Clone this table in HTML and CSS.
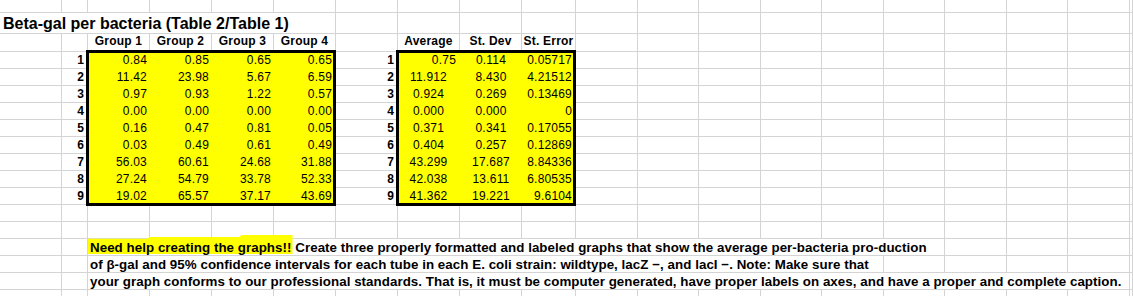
FILE: index.html
```html
<!DOCTYPE html>
<html lang="en">
<head>
<meta charset="utf-8">
<title>Beta-gal per bacteria</title>
<link rel="stylesheet" href="styles.css">
</head>
<body>
<div class="sheet">
  <!-- row 1 -->
  <i></i><i></i><i></i><i></i><i></i><i></i><i></i><i></i><i></i><i></i><i></i><i></i><i></i><i></i><i></i><i></i><i></i><i></i><i></i><i></i>
  <!-- row 2 -->
  <div class="cell title">Beta-gal per bacteria (Table 2/Table 1)</div>
  <i></i><i></i><i></i><i></i><i></i><i></i><i></i><i></i><i></i><i></i><i></i><i></i><i></i><i></i>
  <!-- row 3 -->
  <i></i><i></i>
  <div class="cell head">Group 1</div><div class="cell head">Group 2</div><div class="cell head">Group 3</div><div class="cell head">Group 4</div>
  <i></i>
  <div class="cell head">Average</div><div class="cell head">St. Dev</div><div class="cell head">St. Error</div>
  <i></i><i></i><i></i><i></i><i></i><i></i><i></i><i></i><i></i><i></i>
  <!-- rows 4-12 -->
  <i></i><div class="cell num">1</div><div class="cell num">1</div><i></i><i></i><i></i><i></i><i></i><i></i><i></i><i></i><i></i><i></i>
  <i></i><div class="cell num">2</div><div class="cell num">2</div><i></i><i></i><i></i><i></i><i></i><i></i><i></i><i></i><i></i><i></i>
  <i></i><div class="cell num">3</div><div class="cell num">3</div><i></i><i></i><i></i><i></i><i></i><i></i><i></i><i></i><i></i><i></i>
  <i></i><div class="cell num">4</div><div class="cell num">4</div><i></i><i></i><i></i><i></i><i></i><i></i><i></i><i></i><i></i><i></i>
  <i></i><div class="cell num">5</div><div class="cell num">5</div><i></i><i></i><i></i><i></i><i></i><i></i><i></i><i></i><i></i><i></i>
  <i></i><div class="cell num">6</div><div class="cell num">6</div><i></i><i></i><i></i><i></i><i></i><i></i><i></i><i></i><i></i><i></i>
  <i></i><div class="cell num">7</div><div class="cell num">7</div><i></i><i></i><i></i><i></i><i></i><i></i><i></i><i></i><i></i><i></i>
  <i></i><div class="cell num">8</div><div class="cell num">8</div><i></i><i></i><i></i><i></i><i></i><i></i><i></i><i></i><i></i><i></i>
  <i></i><div class="cell num">9</div><div class="cell num">9</div><i></i><i></i><i></i><i></i><i></i><i></i><i></i><i></i><i></i><i></i>
  <!-- rows 13-14 -->
  <i></i><i></i><i></i><i></i><i></i><i></i><i></i><i></i><i></i><i></i><i></i><i></i><i></i><i></i><i></i><i></i><i></i><i></i><i></i><i></i>
  <i></i><i></i><i></i><i></i><i></i><i></i><i></i><i></i><i></i><i></i><i></i><i></i><i></i><i></i><i></i><i></i><i></i><i></i><i></i><i></i>
  <!-- row 15 -->
  <i></i><i></i>
  <div class="cell note span-14"><span><mark class="hl">Need help creating the graphs!!</mark> Create three properly formatted and labeled graphs that show the average per-bacteria pro-duction</span></div>
  <i></i><i></i><i></i><i></i>
  <!-- row 16 -->
  <i></i><i></i>
  <div class="cell note span-13"><span>of β-gal and 95% confidence intervals for each tube in each E. coli strain: wildtype, lacZ −, and lacI −. Note: Make sure that</span></div>
  <i></i><i></i><i></i><i></i><i></i>
  <!-- row 17 -->
  <i></i><i></i>
  <div class="cell note span-17"><span>your graph conforms to our professional standards. That is, it must be computer generated, have proper labels on axes, and have a proper and complete caption.</span></div>
  <i></i>
  <!-- row 18 -->
  <i></i><i></i><i></i><i></i><i></i><i></i><i></i><i></i><i></i><i></i><i></i><i></i><i></i><i></i><i></i><i></i><i></i><i></i><i></i><i></i>

  <!-- yellow data blocks -->
  <div class="block groups">
    <div class="v">0.84</div><div class="v">0.85</div><div class="v">0.65</div><div class="v">0.65</div>
    <div class="v">11.42</div><div class="v">23.98</div><div class="v">5.67</div><div class="v">6.59</div>
    <div class="v">0.97</div><div class="v">0.93</div><div class="v">1.22</div><div class="v">0.57</div>
    <div class="v">0.00</div><div class="v">0.00</div><div class="v">0.00</div><div class="v">0.00</div>
    <div class="v">0.16</div><div class="v">0.47</div><div class="v">0.81</div><div class="v">0.05</div>
    <div class="v">0.03</div><div class="v">0.49</div><div class="v">0.61</div><div class="v">0.49</div>
    <div class="v">56.03</div><div class="v">60.61</div><div class="v">24.68</div><div class="v">31.88</div>
    <div class="v">27.24</div><div class="v">54.79</div><div class="v">33.78</div><div class="v">52.33</div>
    <div class="v">19.02</div><div class="v">65.57</div><div class="v">37.17</div><div class="v">43.69</div>
  </div>
  <div class="block stats">
    <div class="v avg-r">0.75</div><div class="v ctr">0.114</div><div class="v se">0.05717</div>
    <div class="v avg">11.912</div><div class="v ctr">8.430</div><div class="v se">4.21512</div>
    <div class="v avg">0.924</div><div class="v ctr">0.269</div><div class="v se">0.13469</div>
    <div class="v avg">0.000</div><div class="v ctr">0.000</div><div class="v se">0</div>
    <div class="v avg">0.371</div><div class="v ctr">0.341</div><div class="v se">0.17055</div>
    <div class="v avg">0.404</div><div class="v ctr">0.257</div><div class="v se">0.12869</div>
    <div class="v avg">43.299</div><div class="v ctr">17.687</div><div class="v se">8.84336</div>
    <div class="v avg">42.038</div><div class="v ctr">13.611</div><div class="v se">6.80535</div>
    <div class="v avg">41.362</div><div class="v ctr">19.221</div><div class="v se">9.6104</div>
  </div>
</div>
</body>
</html>
```

FILE: styles.css
```css
html, body {
  margin: 0;
  padding: 0;
  background: #fff;
}

body {
  width: 1133px;
  height: 296px;
  overflow: hidden;
  font-family: "Liberation Sans", Arial, sans-serif;
  color: #000;
}

.sheet {
  display: grid;
  grid-template-columns:
    62px 26px 62px 62px 62px 62px 62px 62px 62px 54px
    62px 61px 62px 61px 62px 61px 62px 61px 62px minmax(0, 1fr);
  grid-template-rows: 13px 21px 18px repeat(15, 17px);
}

.sheet > i,
.cell {
  display: block;
  box-sizing: border-box;
  min-width: 0;
  border-right: 1px solid #d4d4d4;
  border-bottom: 1px solid #d4d4d4;
}

.cell {
  display: flex;
  align-items: flex-end;
  white-space: nowrap;
  font-size: 12px;
  line-height: 15px;
  letter-spacing: 0.2px;
}

.title {
  grid-column: span 6;
  font-size: 16px;
  font-weight: bold;
  line-height: 18px;
  padding-left: 3px;
  letter-spacing: 0;
}

.head {
  justify-content: center;
  font-weight: bold;
  padding-bottom: 2px;
}

.num {
  justify-content: flex-end;
  font-weight: bold;
  padding-right: 3px;
}

.note {
  font-size: 13.33px;
  font-weight: bold;
  line-height: 15px;
  padding-left: 2px;
  letter-spacing: 0.05px;
}

.span-13 { grid-column: span 13; }
.span-14 { grid-column: span 14; }
.span-17 { grid-column: span 17; }

.hl {
  background: none;
  color: inherit;
  position: relative;
  z-index: 0;
}

.hl::before {
  content: "";
  position: absolute;
  left: -2px;
  right: -1px;
  top: -5px;
  bottom: 1px;
  background: #ffff00;
  z-index: -1;
  clip-path: polygon(0 20%, 29% 20%, 30% 10%, 74% 10%, 75% 0, 100% 0, 100% 100%, 0 100%);
}

/* yellow blocks with thick black frame */
.block {
  box-sizing: border-box;
  grid-row: 4 / 13;
  margin: -2px 0 -1px -2px;
  border: 3px solid #000;
  background: #ffff00;
  display: grid;
  grid-template-rows: 15px repeat(8, 17px);
  align-content: start;
  font-size: 12px;
  line-height: 15px;
  letter-spacing: 0.2px;
}

.groups {
  grid-column: 3 / 7;
  grid-template-columns: 61px 62px 62px 59px;
}

.stats {
  grid-column: 8 / 11;
  grid-template-columns: 61px 62px 51px;
}

.v {
  display: flex;
  align-items: flex-end;
  justify-content: flex-end;
  white-space: nowrap;
  padding-right: 3px;
}

.groups .v:nth-child(4n) {
  padding-right: 1px;
}

.stats .avg-r {
  padding-right: 4px;
}

.stats .avg {
  justify-content: center;
  padding-right: 2px;
}

.stats .ctr {
  justify-content: center;
  padding-right: 0;
}

.stats .se {
  padding-right: 1px;
}
```
